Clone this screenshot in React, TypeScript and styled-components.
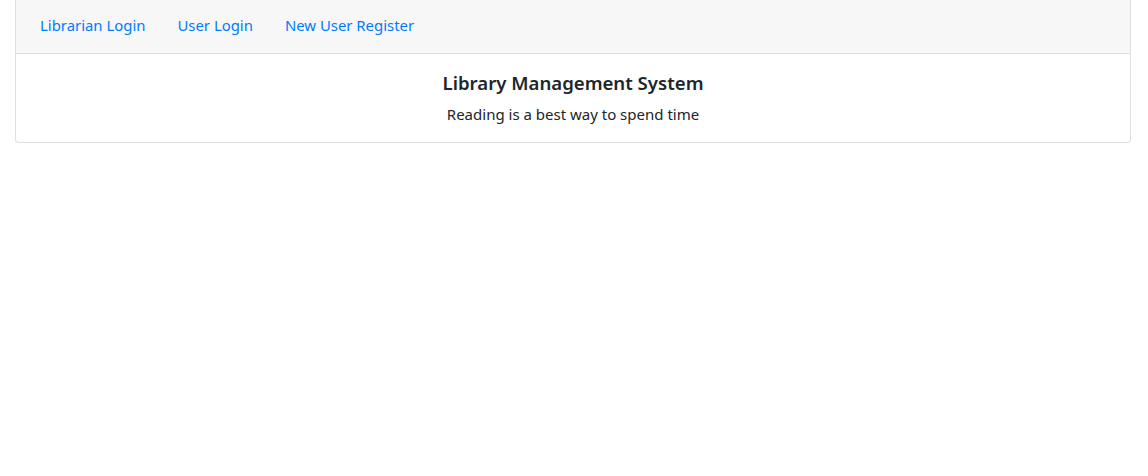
import React from "react";
import styled, { createGlobalStyle } from "styled-components";

const GlobalStyle = createGlobalStyle`
  body {
    margin: 0;
    background: #fff;
    font-family: "Noto Sans", "Open Sans", sans-serif;
    color: #212529;
  }
`;

const Page = styled.div`
  padding: 0 17px 0 15px;
`;

const Card = styled.div`
  border: 1px solid #dfdfdf;
  border-top: 0;
  border-radius: 0 0 4px 4px;
  background: #fff;
`;

const CardHeader = styled.div`
  background: #f7f7f7;
  border-bottom: 1px solid #dfdfdf;
  height: 53px;
  display: flex;
  align-items: center;
  padding: 0 8px;
`;

const NavLink = styled.a`
  display: block;
  padding: 0 16px;
  font-size: 14.9px;
  color: #007bff;
  text-decoration: none;
  line-height: 24px;
  margin-top: -3px;
`;

const CardBody = styled.div`
  text-align: center;
  padding: 17px 20px 16px;
`;

const Title = styled.h5`
  margin: 0 0 7px;
  font-size: 18.6px;
  font-weight: 600;
  line-height: 24px;
`;

const Subtitle = styled.p`
  margin: 0;
  font-size: 15px;
  line-height: 24px;
`;

const links = ["Librarian Login", "User Login", "New User Register"];

export default function App() {
  return (
    <>
      <GlobalStyle />
      <Page>
        <Card>
          <CardHeader>
            {links.map((l) => (
              <NavLink key={l} href="#">
                {l}
              </NavLink>
            ))}
          </CardHeader>
          <CardBody>
            <Title>Library Management System</Title>
            <Subtitle>Reading is a best way to spend time</Subtitle>
          </CardBody>
        </Card>
      </Page>
    </>
  );
}
